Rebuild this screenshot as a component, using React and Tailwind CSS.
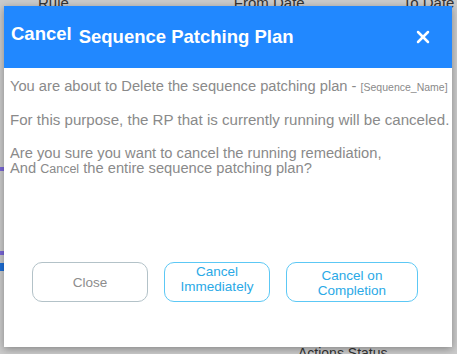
import { X } from "lucide-react";

export default function App() {
  return (
    <div
      className="relative w-[457px] h-[354px] overflow-hidden bg-[#cbcbcb]"
      style={{ fontFamily: "'Liberation Sans', Arial, sans-serif" }}
    >
      {/* page behind the dialog */}
      <div className="flex text-[15px] text-[#333] leading-none -mt-[5px] h-[12px]">
        <span className="ml-[38px]">Rule</span>
        <span className="ml-[165px]">From Date</span>
        <span className="ml-[98px]">To Date</span>
      </div>
      <div className="flex flex-col mt-[160px] gap-[80px]">
        <div className="w-[4px] h-[4px] bg-[#7b68d9]" />
        <div className="flex flex-col gap-[8px]">
          <div className="w-[4px] h-[4px] bg-[#7b68d9]" />
          <div className="w-[4px] h-[8px] bg-[#1e6fd9]" />
        </div>
      </div>
      <div className="absolute left-[298px] top-[343px] text-[14px] text-[#333]">Actions Status</div>

      {/* dialog */}
      <div className="absolute left-[4px] top-[6px] w-[448px] h-[341px] bg-white shadow-[0_2px_8px_rgba(0,0,0,0.35)] flex flex-col">
        <div className="h-[62px] bg-[#2188ff] flex items-center px-[7px] text-white font-bold">
          <span className="text-[18.5px] -mt-[6px]">Cancel</span>
          <span className="text-[18.5px] ml-[7px]">Sequence Patching Plan</span>
          <X className="ml-auto mr-[12px] w-[20px] h-[20px]" strokeWidth={3} />
        </div>
        <div className="px-[6px] pt-[10px] text-[14.7px] text-[#8a8a8a] leading-[16px]">
          <p className="whitespace-nowrap">
            You are about to Delete the sequence patching plan -{" "}
            <span className="text-[10.5px]">[Sequence_Name]</span>
          </p>
          <p className="mt-[17px] text-[15.1px] whitespace-nowrap">
            For this purpose, the RP that is currently running will be canceled.
          </p>
          <p className="mt-[17px]">Are you sure you want to cancel the running remediation,</p>
          <p className="-mt-[1px]">
            And <span className="text-[12.5px]">Cancel</span> the entire sequence patching plan?
          </p>
        </div>
        <div className="flex gap-[16px] pl-[28px] mt-[85px] text-[13.5px] leading-[15px]">
          <button className="w-[116px] h-[40px] rounded-[10px] border border-[#b3c2c8] text-[#8d8d8d]">
            Close
          </button>
          <button className="w-[106px] h-[40px] rounded-[10px] border border-[#5cc8f5] text-[#2aa9e6] pb-[6px]">
            Cancel
            <br />
            Immediately
          </button>
          <button className="w-[132px] h-[40px] rounded-[10px] border border-[#5cc8f5] text-[#2aa9e6] pt-[2px]">
            Cancel on
            <br />
            Completion
          </button>
        </div>
      </div>
    </div>
  );
}
